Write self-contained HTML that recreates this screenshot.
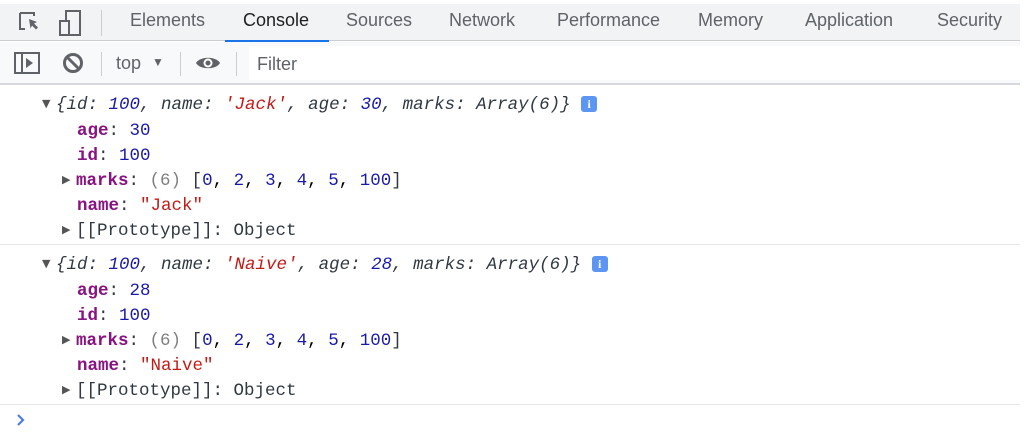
<!DOCTYPE html>
<html><head><style>
*{margin:0;padding:0;box-sizing:border-box}
body{width:1024px;height:446px;background:#fff;position:relative;overflow:hidden;font-family:"Liberation Sans",sans-serif}
.tabs{position:absolute;left:0;top:4px;width:1020px;height:37px;background:#f1f3f4;border-bottom:1px solid #cbcdd1}
.tab{position:absolute;top:6px;font-size:18px;color:#5f6368;white-space:nowrap}
.ul{position:absolute;left:225px;top:36px;width:104px;height:3px;background:#1a73e8}
.tb{position:absolute;left:0;top:42px;width:1020px;height:43px;background:#f8f9fa;border-bottom:2px solid #d6d8db}
.sep{position:absolute;width:1px;background:#cbcdd1}
.filter{position:absolute;left:249px;top:4px;width:771px;height:34px;background:#fff;font-size:18px;color:#5f6368;padding:8px 0 0 8px}
.mono{font-family:"Liberation Mono",monospace;font-size:17.5px;position:absolute;white-space:pre;line-height:25px;height:25px}
.k{color:#881280;font-weight:bold}
.n{color:#1a1aa6}
.s{color:#c41a16}
.g{color:#303942}
.it{font-style:italic}
.gr{color:#808080}
.tri{color:#555;font-size:11px;font-family:"DejaVu Sans",sans-serif;display:inline-block;width:14px;position:relative;top:-2px;line-height:11px}
.info{display:inline-block;width:16px;height:16px;background:#5c95f2;border-radius:3px;color:#fff;font:bold 12px "Liberation Serif",serif;text-align:center;line-height:16px;position:relative;top:-1px;font-style:normal}
.hr{position:absolute;left:0;width:1020px;height:1px;background:#e6e6e6}
</style></head><body>
<div class="tabs">
<svg style="position:absolute;left:17px;top:6px" width="26" height="24" viewBox="0 0 26 24"><path d="M3 3h14v3M3 3v16h5" fill="none" stroke="#5f6368" stroke-width="2"/><path d="M12 9l8 3-3 1.5 4 4-2 2-4-4-1.5 3z" fill="#5f6368"/></svg>
<svg style="position:absolute;left:58px;top:5px" width="26" height="28" viewBox="0 0 26 28"><rect x="8" y="2" width="14" height="24" fill="none" stroke="#5f6368" stroke-width="2"/><rect x="2" y="12" width="9" height="14" fill="#f1f3f4" stroke="#5f6368" stroke-width="2"/></svg>
<div class="sep" style="left:101px;top:6px;height:26px"></div>
<span class="tab" style="left:130px">Elements</span>
<span class="tab" style="left:243px;color:#202124">Console</span>
<span class="tab" style="left:346px">Sources</span>
<span class="tab" style="left:449px">Network</span>
<span class="tab" style="left:557px">Performance</span>
<span class="tab" style="left:698px">Memory</span>
<span class="tab" style="left:805px">Application</span>
<span class="tab" style="left:937px">Security</span>
<div class="ul"></div>
</div>
<div class="tb">
<svg style="position:absolute;left:14px;top:10px" width="26" height="22" viewBox="0 0 26 22"><rect x="1" y="1" width="24" height="20" fill="none" stroke="#5f6368" stroke-width="2"/><line x1="8" y1="1" x2="8" y2="21" stroke="#5f6368" stroke-width="2"/><path d="M12 6l7 5-7 5z" fill="#5f6368"/></svg>
<svg style="position:absolute;left:62px;top:10px" width="22" height="22" viewBox="0 0 22 22"><circle cx="11" cy="11" r="8.5" fill="none" stroke="#5f6368" stroke-width="3"/><line x1="5" y1="5" x2="17" y2="17" stroke="#5f6368" stroke-width="3"/></svg>
<div class="sep" style="left:101px;top:10px;height:24px"></div>
<span class="tab" style="left:116px;top:11px;font-size:18px">top</span>
<span style="position:absolute;left:152px;top:13px;font-size:12px;color:#5f6368">▼</span>
<div class="sep" style="left:180px;top:10px;height:24px"></div>
<svg style="position:absolute;left:195px;top:12px" width="26" height="18" viewBox="0 0 26 18"><path d="M1 9C5 2 21 2 25 9 21 16 5 16 1 9z" fill="#5f6368"/><circle cx="13" cy="9" r="4.5" fill="#fff"/><circle cx="13" cy="9" r="2.5" fill="#5f6368"/></svg>
<div class="sep" style="left:236px;top:10px;height:24px"></div>
<div class="filter">Filter</div>
</div>

<div class="mono" style="left:42px;top:93px"><span class="tri">▼</span><span class="it g">{id: <span class="n">100</span>, name: <span class="s">'Jack'</span>, age: <span class="n">30</span>, marks: Array(6)}</span> <span class="info">i</span></div>
<div class="mono" style="left:77px;top:119px"><span class="k">age</span><span class="g">: </span><span class="n">30</span></div>
<div class="mono" style="left:77px;top:144px"><span class="k">id</span><span class="g">: </span><span class="n">100</span></div>
<div class="mono" style="left:62px;top:169px"><span class="tri">▶</span><span class="k">marks</span><span class="g">: </span><span class="gr">(6)</span><span class="g"> [</span><span class="n">0</span>, <span class="n">2</span>, <span class="n">3</span>, <span class="n">4</span>, <span class="n">5</span>, <span class="n">100</span><span class="g">]</span></div>
<div class="mono" style="left:77px;top:194px"><span class="k">name</span><span class="g">: </span><span class="s">"Jack"</span></div>
<div class="mono g" style="left:62px;top:219px"><span class="tri">▶</span>[[Prototype]]: Object</div>
<div class="hr" style="top:244px"></div>

<div class="mono" style="left:42px;top:253px"><span class="tri">▼</span><span class="it g">{id: <span class="n">100</span>, name: <span class="s">'Naive'</span>, age: <span class="n">28</span>, marks: Array(6)}</span> <span class="info">i</span></div>
<div class="mono" style="left:77px;top:279px"><span class="k">age</span><span class="g">: </span><span class="n">28</span></div>
<div class="mono" style="left:77px;top:304px"><span class="k">id</span><span class="g">: </span><span class="n">100</span></div>
<div class="mono" style="left:62px;top:329px"><span class="tri">▶</span><span class="k">marks</span><span class="g">: </span><span class="gr">(6)</span><span class="g"> [</span><span class="n">0</span>, <span class="n">2</span>, <span class="n">3</span>, <span class="n">4</span>, <span class="n">5</span>, <span class="n">100</span><span class="g">]</span></div>
<div class="mono" style="left:77px;top:354px"><span class="k">name</span><span class="g">: </span><span class="s">"Naive"</span></div>
<div class="mono g" style="left:62px;top:379px"><span class="tri">▶</span>[[Prototype]]: Object</div>
<div class="hr" style="top:404px"></div>
<svg style="position:absolute;left:16px;top:414px" width="10" height="12" viewBox="0 0 10 12"><path d="M2 1l5 5-5 5" fill="none" stroke="#4a7fe8" stroke-width="2.2"/></svg>
</body></html>
